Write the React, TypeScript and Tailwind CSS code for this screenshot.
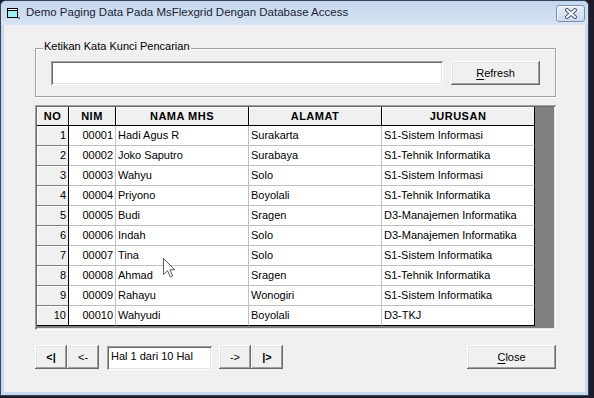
import React from 'react';

const rows: [string, string, string, string, string][] = [
  ['1', '00001', 'Hadi Agus R', 'Surakarta', 'S1-Sistem Informasi'],
  ['2', '00002', 'Joko Saputro', 'Surabaya', 'S1-Tehnik Informatika'],
  ['3', '00003', 'Wahyu', 'Solo', 'S1-Sistem Informasi'],
  ['4', '00004', 'Priyono', 'Boyolali', 'S1-Tehnik Informatika'],
  ['5', '00005', 'Budi', 'Sragen', 'D3-Manajemen Informatika'],
  ['6', '00006', 'Indah', 'Solo', 'D3-Manajemen Informatika'],
  ['7', '00007', 'Tina', 'Solo', 'S1-Sistem Informatika'],
  ['8', '00008', 'Ahmad', 'Sragen', 'S1-Tehnik Informatika'],
  ['9', '00009', 'Rahayu', 'Wonogiri', 'S1-Sistem Informatika'],
  ['10', '00010', 'Wahyudi', 'Boyolali', 'D3-TKJ'],
];

const headers = ['NO', 'NIM', 'NAMA MHS', 'ALAMAT', 'JURUSAN'];

// classic 3D bevels
const raised =
  'bg-[#f0f0f0] shadow-[inset_-1px_-1px_#696969,inset_1px_1px_#ffffff,inset_-2px_-2px_#a0a0a0,inset_2px_2px_#e3e3e3]';
const sunken =
  'bg-white shadow-[inset_1px_1px_#a0a0a0,inset_-1px_-1px_#ffffff,inset_2px_2px_#696969,inset_-2px_-2px_#e3e3e3]';

function Button({ className, children }: { className: string; children: React.ReactNode }) {
  return (
    <div className={`${raised} ${className} h-[24px] flex items-center justify-center text-[11px] text-black`}>
      {children}
    </div>
  );
}

function TitleIcon() {
  return (
    <svg width="14" height="12" viewBox="0 0 14 12">
      <rect x="0.5" y="0.5" width="10" height="9" fill="#9ff0f4" stroke="#000" />
      <line x1="0.5" y1="2.5" x2="10.5" y2="2.5" stroke="#000" />
      <rect x="1" y="1" width="9" height="1" fill="#ffffff" />
      <rect x="11" y="9" width="2" height="2" fill="#6f7f94" />
    </svg>
  );
}

function CloseButton() {
  return (
    <div className="ml-auto mr-[3px] mt-[4px] self-start w-[29px] h-[17px] rounded-[3px] border border-[#7d8fab] bg-gradient-to-b from-[#e6eef8] to-[#cbdbee] flex items-center justify-center shadow-[inset_1px_1px_#f4f8fd]">
      <svg width="14" height="11" viewBox="0 0 14 11">
        <path d="M3 2 L11 9 M11 2 L3 9" stroke="#4b5a72" strokeWidth="4" strokeLinecap="round" />
        <path d="M3 2 L11 9 M11 2 L3 9" stroke="#ffffff" strokeWidth="2" strokeLinecap="round" />
      </svg>
    </div>
  );
}

function Cursor() {
  return (
    <svg className="absolute left-[163px] top-[258px]" width="14" height="21" viewBox="0 0 14 21">
      <path
        d="M0.5 0.5 L0.5 16.5 L4.5 12.7 L7.3 19 L9.6 18 L6.9 11.8 L11.8 11.8 Z"
        fill="#ffffff"
        stroke="#5a5a5a"
        strokeWidth="1"
        strokeLinejoin="round"
      />
    </svg>
  );
}

function Grid() {
  return (
    <div className="mt-[8px] w-[521px] h-[225px] p-[2px] bg-[#808080] shadow-[inset_1px_1px_#a0a0a0,inset_-1px_-1px_#ffffff,inset_2px_2px_#696969,inset_-2px_-2px_#e3e3e3]">
      <div className="w-[498px] flex flex-col text-[11px] text-black">
        <div className="grid grid-cols-[32px_47px_133px_133px_153px] h-[19px]">
          {headers.map((h) => (
            <div
              key={h}
              className="bg-[#f0f0f0] border-r border-b border-black shadow-[inset_1px_1px_#ffffff] text-center font-bold tracking-[0.5px] leading-[18px]"
            >
              {h}
            </div>
          ))}
        </div>
        {rows.map((r, i) => {
          const last = i === rows.length - 1;
          const line = last ? 'border-b-black' : 'border-b-[#c0c0c0]';
          return (
            <div key={r[0]} className="grid grid-cols-[32px_47px_133px_133px_153px] h-[20px]">
              <div
                className={`bg-[#f0f0f0] border-r border-b border-r-black ${last ? 'border-b-black' : 'border-b-[#808080]'} shadow-[inset_1px_1px_#ffffff] text-right pr-[2px] leading-[19px]`}
              >
                {r[0]}
              </div>
              <div className={`bg-white border-r border-b border-r-[#c0c0c0] ${line} text-right pr-[2px] leading-[19px]`}>
                {r[1]}
              </div>
              <div className={`bg-white border-r border-b border-r-[#c0c0c0] ${line} pl-[2px] leading-[19px] whitespace-nowrap`}>
                {r[2]}
              </div>
              <div className={`bg-white border-r border-b border-r-[#c0c0c0] ${line} pl-[2px] leading-[19px] whitespace-nowrap`}>
                {r[3]}
              </div>
              <div className={`bg-white border-r border-b border-r-black ${line} pl-[2px] leading-[19px] whitespace-nowrap`}>
                {r[4]}
              </div>
            </div>
          );
        })}
      </div>
    </div>
  );
}

export default function App() {
  return (
    <div className="relative w-[594px] h-[398px] overflow-hidden bg-[#1e1b2b] font-['Liberation_Sans',Arial,sans-serif]">
      <div className="w-[589px] h-[396px] flex flex-col bg-[#c6d8ed] border border-[#34425a] rounded-t-[6px]">
        {/* Title bar */}
        <div className="h-[24px] flex items-center bg-gradient-to-b from-[#c4d7ed] to-[#d6e4f3] rounded-t-[5px]">
          <div className="ml-[6px] mt-[1px]">
            <TitleIcon />
          </div>
          <span className="ml-[5px] text-[11.5px] text-[#1b2233] whitespace-nowrap">
            Demo Paging Data Pada MsFlexgrid Dengan Database Access
          </span>
          <CloseButton />
        </div>

        {/* Client area */}
        <div className="flex-1 flex px-[3px] pb-[3px]">
          <div className="flex-1 bg-[#f0f0f0] flex flex-col pl-[31px] pt-[23px]">
            {/* Search group */}
            <div className="relative w-[521px] h-[49px] border border-[#a0a0a0] shadow-[inset_1px_1px_#ffffff,1px_1px_#ffffff]">
              <span className="absolute left-[7px] top-[-9px] px-[1px] bg-[#f0f0f0] text-[11px] leading-[13px] text-black whitespace-nowrap">
                Ketikan Kata Kunci Pencarian
              </span>
              <div className="flex gap-[8px] pl-[15px] pt-[12px]">
                <div className={`${sunken} w-[392px] h-[24px]`} />
                <Button className="w-[89px]">
                  <span>
                    <span className="underline underline-offset-2">R</span>efresh
                  </span>
                </Button>
              </div>
            </div>

            <Grid />

            {/* Paging controls */}
            <div className="mt-[15px] w-[521px] flex items-start justify-between">
              <div className="flex items-start">
                <Button className="w-[32px] font-bold">&lt;|</Button>
                <Button className="w-[32px]">&lt;-</Button>
                <div className={`${sunken} ml-[8px] mt-[1px] w-[105px] h-[24px] pl-[4px] pt-[4px] text-[11px] leading-[13px] text-black whitespace-nowrap`}>
                  Hal 1 dari 10 Hal
                </div>
                <Button className="ml-[7px] w-[32px]">-&gt;</Button>
                <Button className="w-[32px] font-bold">|&gt;</Button>
              </div>
              <Button className="w-[89px]">
                <span>
                  <span className="underline underline-offset-2">C</span>lose
                </span>
              </Button>
            </div>
          </div>
        </div>
      </div>
      <Cursor />
    </div>
  );
}
